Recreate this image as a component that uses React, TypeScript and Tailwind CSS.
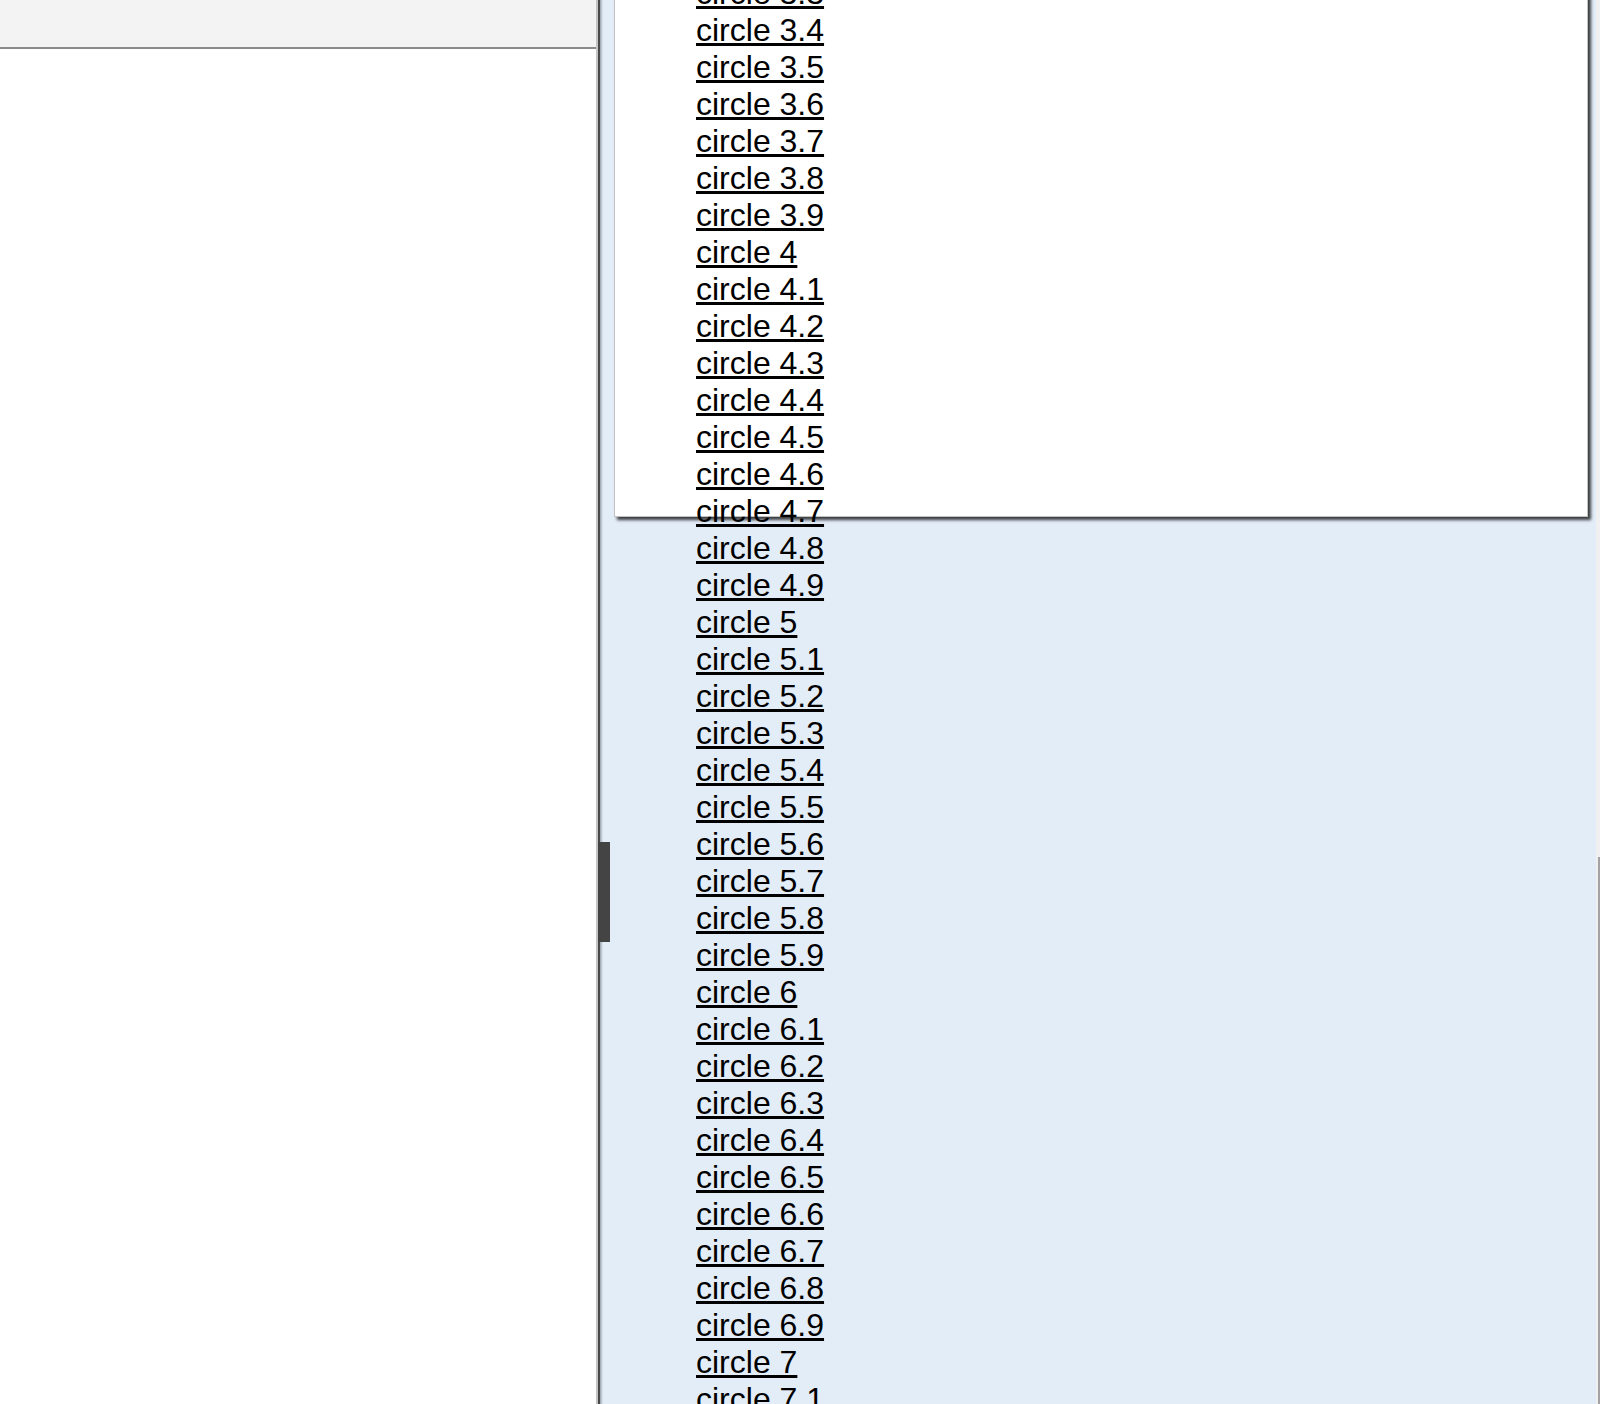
import React from "react";

const labels: string[] = [];
for (let i = 33; i <= 76; i++) {
  labels.push(i % 10 === 0 ? `circle ${i / 10}` : `circle ${Math.floor(i / 10)}.${i % 10}`);
}

export default function App() {
  return (
    <div className="flex h-[1404px] w-[1600px] overflow-hidden bg-white" style={{ fontFamily: '"Liberation Sans", Arial, sans-serif' }}>
      {/* left panel */}
      <div className="flex w-[596px] shrink-0 flex-col bg-white">
        <div className="h-[49px] border-b-2 border-[#8a8a8a] bg-[#f3f3f3]" />
        <div className="flex-1" />
      </div>
      {/* divider */}
      <div className="relative flex w-[4px] shrink-0">
        <div className="w-[2px] bg-[#c4c4c4]" />
        <div className="w-[2px] bg-[#4a4a4a]" />
        <div className="absolute left-[2px] top-[842px] h-[100px] w-[12px] bg-[#444444] z-20" />
      </div>
      {/* right panel */}
      <div className="relative flex flex-1 overflow-hidden bg-[#e3edf8]">
        <div className="w-[3px] shrink-0 bg-gradient-to-r from-[#9aa3ad] to-[#e3edf8]" />
        <div className="absolute left-[14px] top-[-10px] h-[527px] w-[974px] border border-[#c2c2c2] bg-white shadow-[3px_3px_3px_rgba(0,0,0,0.75)]" />
        <ul className="relative z-10 mt-[-25px] flex-1 pl-[93px] text-[32px] leading-[37px] text-black">
          {labels.map((l) => (
            <li key={l}>
              <a href="#" className="underline">{l}</a>
            </li>
          ))}
        </ul>
        <div className="flex w-[4px] shrink-0 flex-col bg-[#f0f0f0]">
          <div className="h-[857px]" />
          <div className="ml-[2px] flex-1 bg-[#a3a3a3]" />
        </div>
      </div>
    </div>
  );
}
